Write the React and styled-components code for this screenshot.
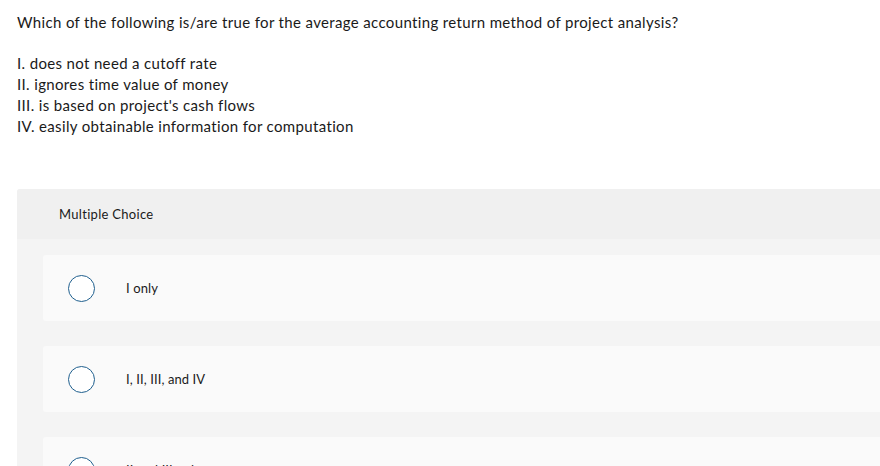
import React from 'react';
import styled, { createGlobalStyle } from 'styled-components';

const GlobalStyle = createGlobalStyle`
  html, body {
    margin: 0;
    padding: 0;
    background: #ffffff;
    overflow: hidden;
  }
  body {
    font-family: Lato, "Open Sans", Arial, sans-serif;
    color: #1a1a1a;
  }
`;

const Page = styled.div`
  padding: 12px 0 0 17px;
`;

const Question = styled.p`
  margin: 0;
  font-size: 15px;
  line-height: 21px;
  letter-spacing: 0.35px;
`;

const Statements = styled.ul`
  list-style: none;
  margin: 20px 0 0;
  padding: 0;
  font-size: 15px;
  line-height: 21px;
  letter-spacing: 0.35px;
`;

const Panel = styled.section`
  margin-top: 52px;
  background: #f4f4f4;
  border-top-left-radius: 3px;
  margin-right: -20px;
`;

const PanelHeader = styled.div`
  height: 50px;
  display: flex;
  align-items: center;
  padding-left: 42px;
  background: #f0f0f0;
  border-top-left-radius: 3px;
  font-size: 13px;
  letter-spacing: 0.3px;
`;

const Options = styled.div`
  display: flex;
  flex-direction: column;
  gap: 25px;
  padding: 16px 0 20px 26px;
`;

const Option = styled.label`
  height: 66px;
  display: flex;
  align-items: center;
  background: #fafafa;
  border-top-left-radius: 3px;
  border-bottom-left-radius: 3px;
  font-size: 13px;
  letter-spacing: 0.1px;
  cursor: pointer;
`;

const Radio = styled.span`
  box-sizing: border-box;
  width: 27px;
  height: 27px;
  margin-left: 25px;
  margin-right: 31px;
  border: 1.5px solid #1f5f8e;
  border-radius: 50%;
  background: #ffffff;
  flex-shrink: 0;
`;

const statements = [
  'I. does not need a cutoff rate',
  'II. ignores time value of money',
  "III. is based on project's cash flows",
  'IV. easily obtainable information for computation',
];

const choices = ['I only', 'I, II, III, and IV', 'II and III only'];

export default function App() {
  return (
    <>
      <GlobalStyle />
      <Page>
        <Question>
          Which of the following is/are true for the average accounting return method of project analysis?
        </Question>
        <Statements>
          {statements.map((s) => (
            <li key={s}>{s}</li>
          ))}
        </Statements>
        <Panel>
          <PanelHeader>Multiple Choice</PanelHeader>
          <Options>
            {choices.map((c) => (
              <Option key={c}>
                <Radio />
                {c}
              </Option>
            ))}
          </Options>
        </Panel>
      </Page>
    </>
  );
}
